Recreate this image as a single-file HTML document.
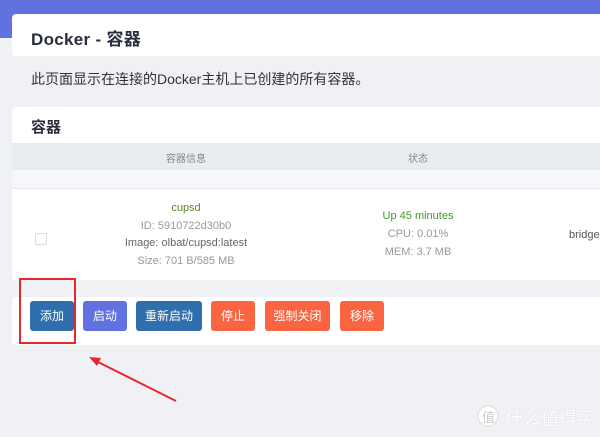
<!DOCTYPE html>
<html><head><meta charset="utf-8"><style>
*{margin:0;padding:0;box-sizing:border-box}
body{width:600px;height:437px;overflow:hidden;background:#f0f1f4;font-family:"Liberation Sans","Noto Sans CJK SC",sans-serif;position:relative;color:#333}
.top{position:absolute;left:0;top:0;width:600px;height:38px;background:#5f72df}
.card{position:absolute;left:12px;width:600px;background:#fff;border-radius:4px}
.abs{position:absolute;white-space:nowrap}
.btn{position:absolute;top:301px;height:30px;border-radius:3px;color:#fff;font-size:12px;line-height:30px;text-align:center}
.c{transform:translateX(-50%)}
</style></head><body>
<div class="top"></div>
<div class="card" style="top:14px;height:42px"></div>
<div class="abs" style="left:31px;top:25px;font-size:17px;color:#2a2d3e;font-weight:bold;letter-spacing:0.3px">Docker - 容器</div>
<div class="abs" style="left:31px;top:69px;font-size:14px;color:#333">此页面显示在连接的Docker主机上已创建的所有容器。</div>
<div class="card" style="top:107px;height:173px"></div>
<div class="abs" style="left:31px;top:116px;font-size:15px;font-weight:bold;color:#2a2d3e">容器</div>
<div class="abs" style="left:12px;top:143px;width:590px;height:27px;background:#e9ecef"></div>
<div class="abs" style="left:12px;top:170px;width:590px;height:19px;background:#f5f7f9;border-bottom:1px solid #e3e6ea"></div>
<div class="abs c" style="left:186px;top:150px;font-size:10px;color:#888">容器信息</div>
<div class="abs c" style="left:418px;top:150px;font-size:10px;color:#888">状态</div>
<div class="abs" style="left:35px;top:233px;width:12px;height:12px;border:1px solid #ddd;border-radius:2px"></div>
<div class="abs c" style="left:186px;top:202px;font-size:11px;color:#5a8a1e">cupsd</div>
<div class="abs c" style="left:186px;top:220px;font-size:11px;color:#999">ID: 5910722d30b0</div>
<div class="abs c" style="left:186px;top:237px;font-size:11px;color:#666">Image: olbat/cupsd:latest</div>
<div class="abs c" style="left:186px;top:255px;font-size:11px;color:#999">Size: 701 B/585 MB</div>
<div class="abs c" style="left:418px;top:210px;font-size:11px;color:#3d9a2a">Up 45 minutes</div>
<div class="abs c" style="left:418px;top:228px;font-size:11px;color:#999">CPU: 0.01%</div>
<div class="abs c" style="left:418px;top:246px;font-size:11px;color:#999">MEM: 3.7 MB</div>
<div class="abs" style="left:569px;top:229px;font-size:11px;color:#555">bridge</div>
<div class="card" style="top:297px;height:48px"></div>
<div class="btn" style="left:30px;width:44px;background:#2f6fad">添加</div>
<div class="btn" style="left:83px;width:44px;background:#6171e0">启动</div>
<div class="btn" style="left:136px;width:66px;background:#2f6fad">重新启动</div>
<div class="btn" style="left:211px;width:44px;background:#fa6441">停止</div>
<div class="btn" style="left:265px;width:65px;background:#fa6441">强制关闭</div>
<div class="btn" style="left:340px;width:44px;background:#fa6441">移除</div>
<div class="abs" style="left:19px;top:278px;width:57px;height:66px;border:2px solid #e8262b"></div>
<svg class="abs" style="left:0;top:0" width="600" height="437"><line x1="176" y1="401" x2="96" y2="361" stroke="#e8262b" stroke-width="2"/><polygon points="89,357 101,358 97,366" fill="#e8262b"/>
<circle cx="488" cy="416" r="10" fill="#fff" stroke="#ddd"/></svg>
<div class="abs" style="left:482px;top:407px;font-size:13px;color:#ccc">值</div>
<div class="abs" style="left:505px;top:405px;font-size:18px;color:#fff;text-shadow:0 0 1px #ccc">什么值得买</div>
</body></html>
